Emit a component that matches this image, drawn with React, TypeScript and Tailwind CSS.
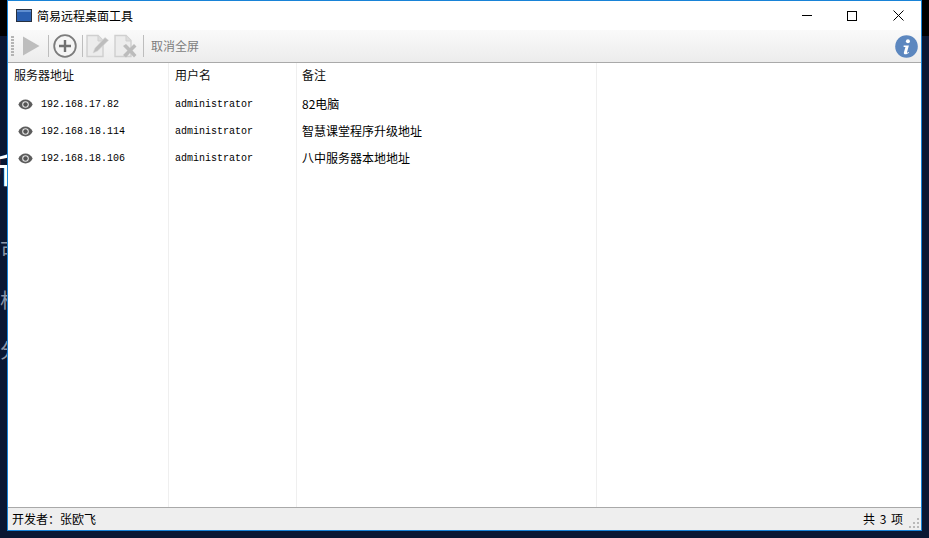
import React from "react";

const cjk = "font-['Microsoft_YaHei','Noto_Sans_CJK_SC',sans-serif]";
const mono = "font-['Liberation_Mono',monospace]";

const rows = [
  ["192.168.17.82", "administrator", "82电脑"],
  ["192.168.18.114", "administrator", "智慧课堂程序升级地址"],
  ["192.168.18.106", "administrator", "八中服务器本地地址"],
];

function Eye() {
  return (
    <svg width="15" height="11" viewBox="0 0 15 11" className="shrink-0">
      <path d="M0.3 5.5C2 2.2 4.6 .6 7.5 .6s5.5 1.6 7.2 4.9c-1.7 3.3-4.3 4.9-7.2 4.9S2 8.8.3 5.5z" fill="#5c5c5c" />
      <circle cx="7.5" cy="5.5" r="3.3" fill="#e6e6e6" />
      <circle cx="7.5" cy="5.5" r="2.2" fill="#555555" />
    </svg>
  );
}

function Sep({ className }: { className: string }) {
  return <div className={`w-px h-[22px] bg-[#bdbdbd] shrink-0 ${className}`} />;
}

function Doc({ kind, className }: { kind: "edit" | "del"; className: string }) {
  return (
    <svg width="23" height="24" viewBox="0 0 23 24" className={`shrink-0 ${className}`}>
      <path d="M1 1.500h11l5 5v16H1z" fill="#ececec" stroke="#cfcfcf" strokeWidth="1.4" />
      <path d="M12 1.500v5.500h5" fill="#dcdcdc" stroke="#cfcfcf" strokeWidth="1" />
      {kind === "edit" ? (
        <path d="M7 19l2-5 10-10.500 3.500 2.800L11.500 17z" fill="#bdbdbd" stroke="#d8d8d8" strokeWidth=".6" />
      ) : (
        <path d="M9 12l3-2 4 4 4-4 2.500 2.500-4 4 4 4.500-2.500 2.500-4-4.500-4 4.500-3-2.500 4.500-4.500z" fill="#bcbcbc" />
      )}
    </svg>
  );
}

function Column({ title, width, pl, children }: { title: string; width: string; pl: string; children?: React.ReactNode }) {
  return (
    <div className={`${width} shrink-0 border-r border-[#efefef] flex flex-col`}>
      <div className={`h-[27px] pb-[3px] flex items-center ${pl} text-[12px] text-[#111] ${cjk}`}>{title}</div>
      {children}
    </div>
  );
}

export default function App() {
  return (
    <div className="w-[929px] h-[538px] overflow-hidden bg-[#0a1733] flex flex-col">
      <div className="h-[531px] flex shrink-0">
        <div className="w-[7px] flex flex-col shrink-0 overflow-hidden">
          <div className="h-[36px] bg-black shrink-0" />
          <div className={`relative flex-1 ${cjk}`}>
            <span className="absolute left-[-22px] top-[116px] text-[34px] leading-none font-medium text-white">新</span>
            <span className="absolute left-[0px] top-[204px] text-[20px] leading-none text-[#8d96a6]">可</span>
            <span className="absolute left-[0px] top-[254px] text-[20px] leading-none text-[#8d96a6]">析</span>
            <span className="absolute left-[0px] top-[304px] text-[20px] leading-none text-[#8d96a6]">分</span>
          </div>
        </div>
        <div className="w-[915px] shrink-0 flex flex-col bg-white border border-[#1883d7]">
          <div className={`h-[29px] shrink-0 flex items-center ${cjk}`}>
            <svg width="16" height="13" viewBox="0 0 16 13" className="ml-[8px] shrink-0">
              <rect x=".5" y=".5" width="15" height="12" fill="#2a5fb0" stroke="#27303f" />
              <rect x="1" y="1" width="14" height="2" fill="#5f8ed0" />
            </svg>
            <span className="ml-[5px] text-[12px] text-black">简易远程桌面工具</span>
            <div className="ml-auto flex items-center text-black">
              <div className="w-[45px] h-[29px] flex items-center justify-center">
                <div className="w-[10px] h-px bg-black" />
              </div>
              <div className="w-[46px] h-[29px] flex items-center justify-center">
                <div className="w-[10px] h-[10px] border border-black" />
              </div>
              <div className="w-[46px] h-[29px] flex items-center justify-center">
                <svg width="11" height="11" viewBox="0 0 11 11">
                  <path d="M.5.5l10 10M10.500.5l-10 10" stroke="#000" strokeWidth="1" fill="none" />
                </svg>
              </div>
            </div>
          </div>
          <div className="h-[33px] shrink-0 flex items-center bg-gradient-to-b from-[#fafafa] to-[#ececec] border-b border-[#a9a9a9] pl-[3px]">
            <div className="w-[3px] h-[20px] shrink-0 bg-[repeating-linear-gradient(to_bottom,#b4b4b4_0,#b4b4b4_2px,transparent_2px,transparent_3px)]" />
            <svg width="18" height="20" viewBox="0 0 18 20" className="shrink-0 ml-[8px]">
              <path d="M1 0.500L17.500 10 1 19.500z" fill="#bdbdbd" />
            </svg>
            <Sep className="ml-[8px]" />
            <svg width="24" height="24" viewBox="0 0 24 24" className="shrink-0 ml-[4px]">
              <circle cx="12" cy="12" r="10.800" fill="#f5f5f5" stroke="#7c7c7c" strokeWidth="1.800" />
              <path d="M12 6v12M6 12h12" stroke="#707070" strokeWidth="2.400" />
            </svg>
            <Sep className="ml-[5px]" />
            <Doc kind="edit" className="ml-[3px]" />
            <Doc kind="del" className="ml-[5px]" />
            <Sep className="ml-[6px]" />
            <span className={`ml-[7px] text-[12px] text-[#7d7d7d] ${cjk}`}>取消全屏</span>
            <svg width="23" height="23" viewBox="0 0 24 24" className="ml-auto mr-[3px] shrink-0">
              <circle cx="12" cy="12" r="11.800" fill="#5c87bf" />
              <circle cx="13.500" cy="6.500" r="2.100" fill="#fff" />
              <path d="M9 11h5.500l-2 7c0 .6.500.7 2-.3l.2.900c-2 1.700-5.700 2.400-5.500 0l1.700-6.200H9z" fill="#fff" />
            </svg>
          </div>
          <div className="flex-1 min-h-0 flex bg-white">
            <Column title="服务器地址" width="w-[161px]" pl="pl-[6px]">
              {rows.map((r) => (
                <div key={r[0]} className={`h-[27px] pt-[1px] flex items-center pl-[10px] gap-[8px] text-[10px] text-black ${mono}`}>
                  <Eye />
                  <span>{r[0]}</span>
                </div>
              ))}
            </Column>
            <Column title="用户名" width="w-[128px]" pl="pl-[6px]">
              {rows.map((r) => (
                <div key={r[0]} className={`h-[27px] pt-[1px] flex items-center pl-[6px] text-[10px] text-black ${mono}`}>
                  {r[1]}
                </div>
              ))}
            </Column>
            <Column title="备注" width="w-[300px]" pl="pl-[5px]">
              {rows.map((r) => (
                <div key={r[0]} className={`h-[27px] flex items-center pl-[5px] text-[12px] text-black ${cjk}`}>
                  {r[2]}
                </div>
              ))}
            </Column>
          </div>
          <div className={`h-[23px] shrink-0 flex items-center bg-[#eeeeee] border-t border-[#a9a9a9] pl-[4px] text-[12px] text-black ${cjk}`}>
            <span>开发者：张欧飞</span>
            <span className="ml-auto mr-[6px] whitespace-pre [word-spacing:2px]">共 3 项</span>
            <svg width="10" height="10" viewBox="0 0 10 10" className="mr-[2px] self-end mb-[2px] shrink-0">
              <path d="M8 0h2v2H8zM4 4h2v2H4zM8 4h2v2H8zM0 8h2v2H0zM4 8h2v2H4zM8 8h2v2H8z" fill="#b9b9b9" />
            </svg>
          </div>
        </div>
        <div className="w-[7px] flex flex-col shrink-0">
          <div className="h-[36px] bg-black shrink-0" />
          <div className="flex-1 bg-[#0a1733]" />
        </div>
      </div>
      <div className="flex-1 bg-[#0a1733]" />
    </div>
  );
}
